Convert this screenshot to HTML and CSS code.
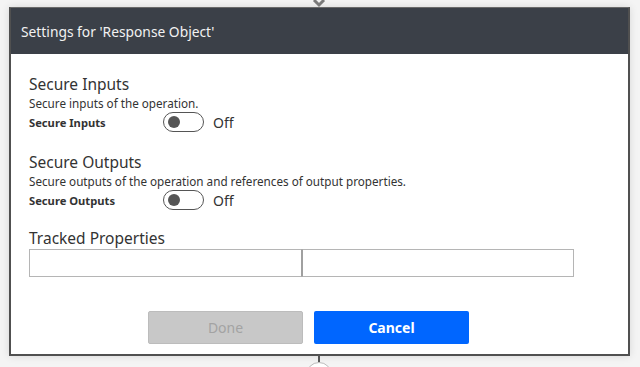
FILE: index.html
```html
<!DOCTYPE html>
<html>
<head>
<meta charset="utf-8">
<link rel="stylesheet" href="styles.css">
</head>
<body>
<div class="canvas">
  <svg class="arrow-top" width="16" height="8" viewBox="0 0 16 8"><path d="M3 0 L8 5 L13 0" fill="none" stroke="#7a7a7a" stroke-width="3"/></svg>
  <div class="dialog">
    <div class="header">Settings for 'Response Object'</div>
    <div class="body">
      <section class="group">
        <h2 class="group-title">Secure Inputs</h2>
        <p class="desc">Secure inputs of the operation.</p>
        <div class="row">
          <span class="label">Secure Inputs</span>
          <span class="toggle"><span class="knob"></span></span>
          <span class="state">Off</span>
        </div>
      </section>
      <section class="group group-outputs">
        <h2 class="group-title">Secure Outputs</h2>
        <p class="desc">Secure outputs of the operation and references of output properties.</p>
        <div class="row">
          <span class="label">Secure Outputs</span>
          <span class="toggle"><span class="knob"></span></span>
          <span class="state">Off</span>
        </div>
      </section>
      <section class="group tracked">
        <h2 class="group-title">Tracked Properties</h2>
        <div class="inputs">
          <div class="field"></div>
          <div class="field"></div>
        </div>
      </section>
      <div class="actions">
        <button class="btn done">Done</button>
        <button class="btn cancel">Cancel</button>
      </div>
    </div>
  </div>
  <div class="connector"><span class="stem"></span><span class="circle"></span></div>
</div>
</body>
</html>
```
FILE: styles.css
```css
* { box-sizing: border-box; }
html, body { margin: 0; padding: 0; }
body {
  background: #f4f4f4;
  font-family: "Noto Sans", "Open Sans", sans-serif;
  width: 640px;
  height: 367px;
  overflow: hidden;
}
.canvas {
  position: relative;
  width: 640px;
  height: 367px;
  padding-top: 7px;
  padding-left: 9px;
  overflow: hidden;
}
.arrow-top {
  position: absolute;
  left: 311px;
  top: 0;
}
.dialog {
  width: 621px;
  height: 349px;
  background: #fff;
  border: 2px solid #505050;
  border-top: 1px solid #6a6a6a;
  box-shadow: 0 0 8px rgba(0,0,0,0.12);
  display: flex;
  flex-direction: column;
}
.header {
  background: #3b4048;
  color: #f2f2f2;
  height: 46px;
  padding-left: 10px;
  font-size: 13.8px;
  line-height: 47px;
}
.body {
  padding: 20px 0 0 18px;
  flex: 1;
  display: flex;
  flex-direction: column;
}
.group { margin-bottom: 19px; }
.group-outputs { margin-bottom: 17px; }
.group-title {
  margin: 0;
  font-weight: normal;
  font-size: 15.5px;
  line-height: 20px;
  color: #333;
}
.desc {
  margin: 2px 0 0 0;
  font-size: 11.7px;
  line-height: 15px;
  color: #333;
}
.row {
  display: flex;
  align-items: center;
  height: 22px;
}
.label {
  width: 134px;
  font-size: 11.2px;
  font-weight: bold;
  color: #333;
}
.toggle {
  width: 41px;
  height: 20px;
  border: 1px solid #555;
  border-radius: 10px;
  display: flex;
  align-items: center;
  padding-left: 4px;
}
.knob {
  width: 12px;
  height: 12px;
  border-radius: 50%;
  background: #555;
}
.state {
  margin-left: 9px;
  font-size: 14px;
  color: #333;
}
.tracked { margin-bottom: 0; }
.inputs {
  display: flex;
  width: 545px;
  margin-top: 1px;
}
.field {
  flex: 1;
  height: 28px;
  border: 1px solid #b5b5b5;
}
.field:first-child { border-right: 1px solid #a0a0a0; }
.field + .field { border-left: 1px solid #a0a0a0; }
.actions {
  display: flex;
  gap: 11px;
  margin-top: 34px;
  padding-left: 119px;
}
.btn {
  width: 155px;
  height: 33px;
  font-family: inherit;
  font-size: 14px;
  border-radius: 2px;
  border: 1px solid transparent;
}
.done {
  background: #c8c8c8;
  border-color: #bcbcbc;
  color: #a3a3a3;
}
.cancel {
  background: #0066ff;
  color: #fff;
  font-weight: bold;
}
.connector {
  position: absolute;
  left: 306px;
  top: 355px;
  display: flex;
  flex-direction: column;
  align-items: center;
  width: 26px;
}
.stem { width: 2px; height: 7px; background: #555; }
.circle {
  width: 26px;
  height: 26px;
  border-radius: 50%;
  border: 1px solid #bbb;
  background: #fff;
}
```
